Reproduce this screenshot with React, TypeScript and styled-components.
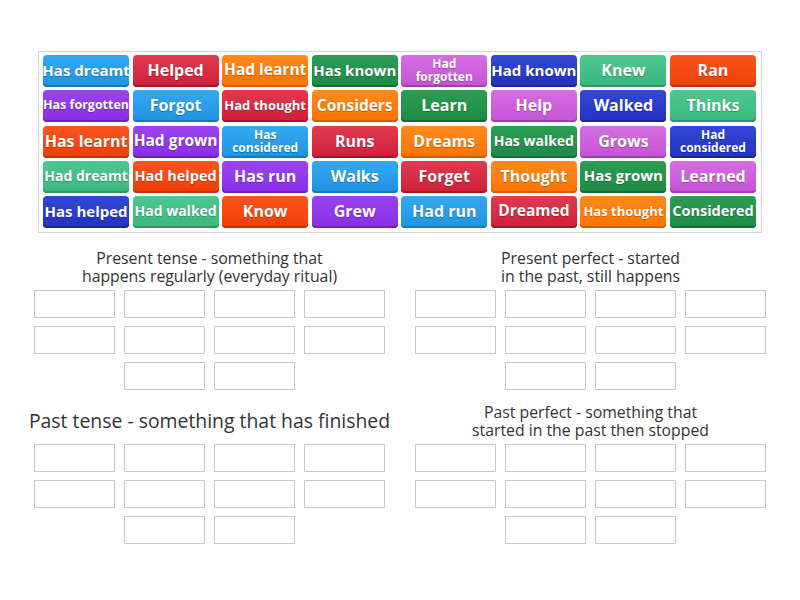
import styled, { createGlobalStyle } from "styled-components";

const GlobalStyle = createGlobalStyle`
  html, body {
    margin: 0;
    padding: 0;
    background: #ffffff;
  }
  body {
    font-family: "Open Sans", "Liberation Sans", sans-serif;
    width: 800px;
    height: 600px;
    overflow: hidden;
  }
`;

const palette = [
  { top: "#34a8f2", base: "#1f93e0", dark: "#1579bd" },
  { top: "#e03a50", base: "#cf2038", dark: "#a8152a" },
  { top: "#ff8a1e", base: "#fc7300", dark: "#d35e00" },
  { top: "#2c9d55", base: "#1d8a43", dark: "#156c33" },
  { top: "#d46fe0", base: "#c653d6", dark: "#a53bb5" },
  { top: "#3447d4", base: "#2232c2", dark: "#19259c" },
  { top: "#4fc690", base: "#3ab77f", dark: "#2c9866" },
  { top: "#fb5520", base: "#f03e08", dark: "#c53104" },
  { top: "#9a44ee", base: "#8a2de6", dark: "#6f1fc0" },
];

type Word = { text: string; size?: number; wrap?: boolean };

const words: Word[] = [
  { text: "Has dreamt", size: 15 },
  { text: "Helped" },
  { text: "Had learnt", size: 15.5 },
  { text: "Has known", size: 15 },
  { text: "Had forgotten", size: 12, wrap: true },
  { text: "Had known", size: 15 },
  { text: "Knew" },
  { text: "Ran" },
  { text: "Has forgotten", size: 12.5 },
  { text: "Forgot" },
  { text: "Had thought", size: 13 },
  { text: "Considers", size: 15.5 },
  { text: "Learn" },
  { text: "Help" },
  { text: "Walked" },
  { text: "Thinks" },
  { text: "Has learnt", size: 16 },
  { text: "Had grown", size: 15.5 },
  { text: "Has considered", size: 12, wrap: true },
  { text: "Runs" },
  { text: "Dreams" },
  { text: "Has walked", size: 14 },
  { text: "Grows" },
  { text: "Had considered", size: 12, wrap: true },
  { text: "Had dreamt", size: 14 },
  { text: "Had helped", size: 14.5 },
  { text: "Has run" },
  { text: "Walks" },
  { text: "Forget" },
  { text: "Thought" },
  { text: "Has grown", size: 15 },
  { text: "Learned" },
  { text: "Has helped", size: 15 },
  { text: "Had walked", size: 14 },
  { text: "Know" },
  { text: "Grew" },
  { text: "Had run" },
  { text: "Dreamed", size: 15.5 },
  { text: "Has thought", size: 13 },
  { text: "Considered", size: 14.5 },
];

const TileBoard = styled.div`
  margin: 51px 0 0 38px;
  width: 724px;
  box-sizing: border-box;
  border: 1px solid #d6d6d6;
  padding: 3px 5px 4px 4px;
  display: grid;
  grid-template-columns: repeat(8, 1fr);
  grid-auto-rows: 32px;
  column-gap: 3.5px;
  row-gap: 3.3px;
`;

const Tile = styled.div<{ $c: number; $size: number; $wrap: boolean }>`
  display: flex;
  align-items: center;
  justify-content: center;
  text-align: center;
  border-radius: 4px;
  background: linear-gradient(
    ${(p) => palette[p.$c].top},
    ${(p) => palette[p.$c].base}
  );
  box-shadow: inset 0 -2px 0 ${(p) => palette[p.$c].dark};
  color: #ffffff;
  font-weight: 700;
  font-size: ${(p) => p.$size}px;
  line-height: ${(p) => (p.$wrap ? "13px" : "1")};
  white-space: ${(p) => (p.$wrap ? "normal" : "nowrap")};
  padding: 0 2px 2px;
  text-shadow: 0 1px 1px rgba(0, 0, 0, 0.25);
  overflow: hidden;
`;

const Zones = styled.div`
  margin-top: 16px;
  padding: 0 34px;
  display: grid;
  grid-template-columns: 351px 351px;
  column-gap: 30px;
  row-gap: 13px;
`;

const Group = styled.div`
  display: flex;
  flex-direction: column;
`;

const Title = styled.div<{ $big?: boolean }>`
  height: 36px;
  display: flex;
  align-items: center;
  justify-content: center;
  text-align: center;
  color: #333333;
  font-size: ${(p) => (p.$big ? "19.4px" : "15.8px")};
  line-height: 18px;
  white-space: nowrap;
  margin-bottom: 5px;
`;

const Slots = styled.div`
  display: flex;
  flex-wrap: wrap;
  justify-content: center;
  column-gap: 9px;
  row-gap: 8px;
`;

const Slot = styled.div`
  width: 81px;
  height: 28px;
  box-sizing: border-box;
  border: 1px solid #c9c9c9;
  background: #ffffff;
`;

const groups = [
  { title: ["Present tense - something that", "happens regularly (everyday ritual)"] },
  { title: ["Present perfect - started", "in the past, still happens"] },
  { title: ["Past tense - something that has finished"], big: true },
  { title: ["Past perfect - something that", "started in the past then stopped"] },
];

export default function App() {
  return (
    <>
      <GlobalStyle />
      <TileBoard>
        {words.map((w, i) => (
          <Tile key={w.text} $c={i % 9} $size={w.size ?? 16} $wrap={!!w.wrap}>
            {w.text}
          </Tile>
        ))}
      </TileBoard>
      <Zones>
        {groups.map((g, gi) => (
          <Group key={gi}>
            <Title $big={g.big}>
              <span>
                {g.title.map((line, li) => (
                  <span key={li}>
                    {line}
                    {li < g.title.length - 1 && <br />}
                  </span>
                ))}
              </span>
            </Title>
            <Slots>
              {Array.from({ length: 10 }).map((_, si) => (
                <Slot key={si} />
              ))}
            </Slots>
          </Group>
        ))}
      </Zones>
    </>
  );
}
